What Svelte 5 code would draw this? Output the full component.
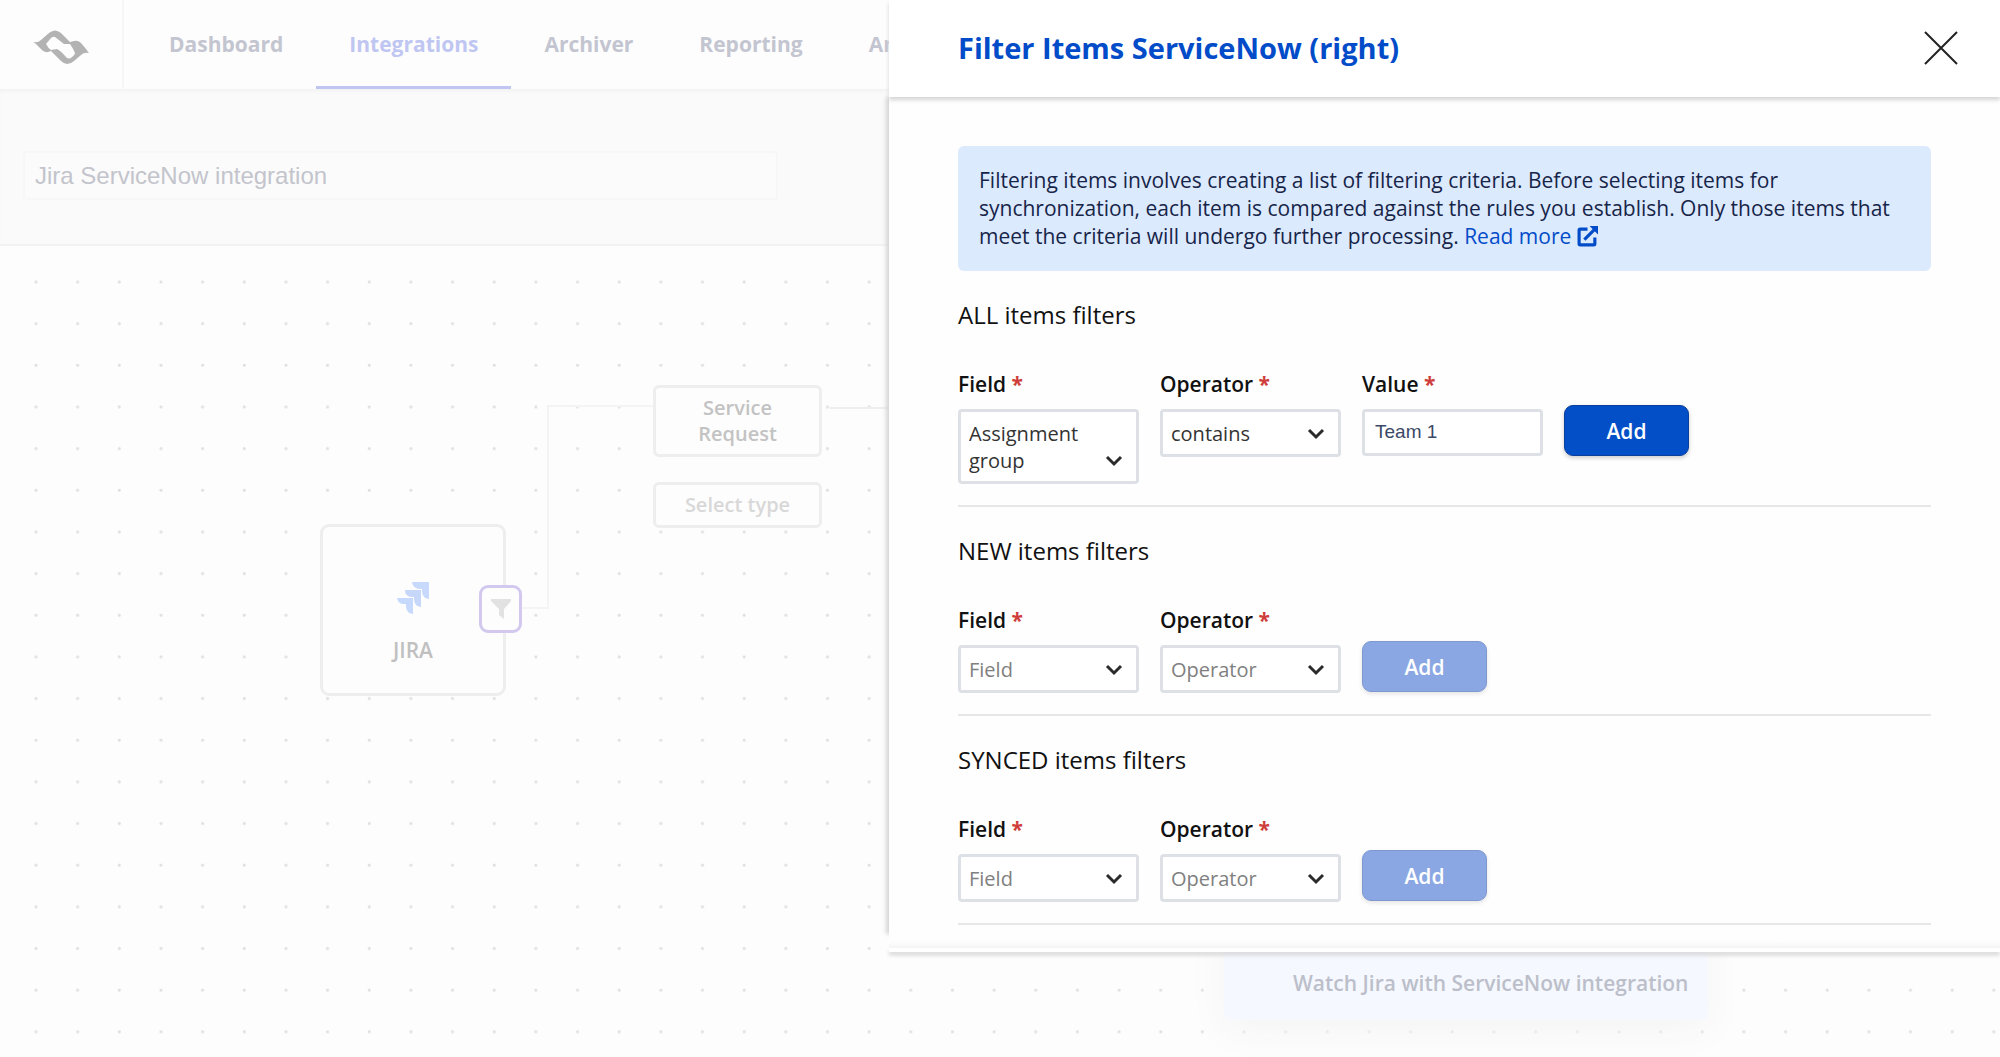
<script lang="ts">
	type Filter = { id: string; title: string; field?: string; operator?: string; value?: string };

	const tabs = ['Dashboard', 'Integrations', 'Archiver', 'Reporting', 'An'];
	const active = 'Integrations';

	let name = $state('Jira ServiceNow integration');
	let filters: Filter[] = $state([
		{ id: 'all', title: 'ALL items filters', field: 'Assignment group', operator: 'contains', value: 'Team 1' },
		{ id: 'new', title: 'NEW items filters' },
		{ id: 'synced', title: 'SYNCED items filters' }
	]);
</script>

{#snippet dropdown(id: string, label: string, value: string | undefined)}
	<div class="field">
		<label for={id}>{label} <span class="required">*</span></label>
		<div class="select">
			<select {id} class:empty={!value}>
				<option>{value ?? label}</option>
			</select>
			<svg class="chevron" viewBox="0 0 18 12" aria-hidden="true">
				<path d="M2 2l7 7 7-7" fill="none" stroke="#2b2b2b" stroke-width="3" />
			</svg>
		</div>
	</div>
{/snippet}

<div class="page">
	<header>
		<a class="logo" href="#home" aria-label="Home">
			<svg viewBox="0 0 56 34" aria-hidden="true">
				<path
					fill="#b3b3b3"
					fill-rule="evenodd"
					d="M0 12q5 1 8-2l8-7q6-5 12 0l9 9 4-1q4-1 7 2l5 6q2 3 3 4-5-1-8 2l-7 6q-7 6-13 0L18 21l-3 1q-4 1-7-3l-5-5zM13 14q2 4 5 6l6-1q4 2 9 8 3 3 6 0 3-2 3-4-2-5-5-9l-6 0-9-7q-2-1-4 1z"
				/>
			</svg>
		</a>
		<nav>
			{#each tabs as tab (tab)}
				<a href="#{tab}" class:active={tab === active}>{tab}</a>
			{/each}
		</nav>
	</header>

	<div class="toolbar">
		<input bind:value={name} aria-label="Integration name" />
	</div>

	<main>
		<svg class="wires" aria-hidden="true">
			<path d="M522 362h26V160h105" />
			<path class="dark" d="M830 162h80" />
		</svg>
		<div class="node jira">
			<svg viewBox="0 0 32 32" aria-hidden="true">
				<path fill="#c7d9fd" d="M15 0h17v17q-7-1-7-8V7h-2q-7 0-8-7z" />
				<path fill="#c7d7fa" d="M8 8h16v17q-7-1-7-8v-2h-2q-7 0-7-7z" />
				<path fill="#c7d9fd" d="M0 16h16v16q-7-1-7-8v-2H7q-6 0-7-6z" />
				<path fill="#fdfdfd" d="M14 7h11v11h-1V8H14zM6 15h11v11h-1V16H6z" />
			</svg>
			<span>JIRA</span>
			<button class="funnel" aria-label="Filter items">
				<svg viewBox="0 0 20 20" aria-hidden="true">
					<path fill="#e2e2e2" d="M0 0h20v2l-7 8v10l-5-4v-6L0 2z" />
				</svg>
			</button>
		</div>
		<button class="node type">Service Request</button>
		<button class="node type blank">Select type</button>
		<a class="watch" href="#watch">Watch Jira with ServiceNow integration</a>
	</main>

	<aside>
		<div class="title">
			<h1>Filter Items ServiceNow (right)</h1>
			<button class="close" aria-label="Close">
				<svg viewBox="0 0 34 34" aria-hidden="true">
					<path d="M1 1l32 32M33 1L1 33" stroke="#222" stroke-width="2" />
				</svg>
			</button>
		</div>
		<div class="body">
			<p class="info">
				Filtering items involves creating a list of filtering criteria. Before selecting items for synchronization,
				each item is compared against the rules you establish. Only those items that meet the criteria will undergo
				further processing.
				<a href="#docs">Read more
					<svg viewBox="0 0 20 20" aria-hidden="true">
						<path d="M10 3H3q-1 0-1 1v13q0 1 1 1h13q1 0 1-1v-6M7 13L17 3" />
						<path class="tip" d="M12 0h8v8z" />
					</svg></a>
			</p>
			{#each filters as filter (filter.id)}
				<section>
					<h2>{filter.title}</h2>
					<div class="row">
						{@render dropdown(filter.id + '-field', 'Field', filter.field)}
						{@render dropdown(filter.id + '-operator', 'Operator', filter.operator)}
						{#if filter.value !== undefined}
							<div class="field">
								<label for="{filter.id}-value">Value <span class="required">*</span></label>
								<input id="{filter.id}-value" bind:value={filter.value} />
							</div>
						{/if}
						<button class="add" disabled={!filter.value}>Add</button>
					</div>
				</section>
			{/each}
		</div>
		<div class="fade"></div>
		<div class="edge"></div>
	</aside>
</div>

<style>
	* {
		box-sizing: border-box;
	}
	.page {
		position: relative;
		display: flex;
		flex-direction: column;
		min-height: 100vh;
		overflow: hidden;
		background: #fdfdfd;
		font-family: 'Open Sans', 'Noto Sans', sans-serif;
	}
	button,
	input,
	select {
		font-family: inherit;
		margin: 0;
	}
	a {
		text-decoration: none;
	}

	header {
		display: flex;
		height: 89px;
	}
	.logo {
		display: flex;
		align-items: center;
		justify-content: center;
		width: 124px;
		padding-top: 4px;
		border-right: 2px solid #f7f7f7;
	}
	.logo svg {
		width: 56px;
		height: 34px;
	}
	nav {
		display: flex;
		padding-left: 12px;
	}
	nav a {
		padding: 29px 33px 0;
		border-bottom: 3px solid transparent;
		color: #c3c5d0;
		font-size: 21px;
		font-weight: 700;
		line-height: 30px;
	}
	nav a.active {
		color: #bfc6f2;
		border-color: #c0c6f1;
	}

	.toolbar {
		height: 157px;
		padding: 62px 23px 0;
		background: #fafafa;
		border-bottom: 2px solid #f2f2f2;
		box-shadow: inset 0 4px 4px -2px #f1f1f1;
	}
	.toolbar input {
		width: 755px;
		height: 49px;
		padding: 0 10px;
		border: 2px solid #f7f7f7;
		border-radius: 4px;
		background: #fbfbfb;
		color: #c3c4cc;
		font: 24px 'Liberation Sans', sans-serif;
	}

	main {
		position: relative;
		flex: 1;
		background: radial-gradient(circle at 36px 36px, #e0e0e0 1px, transparent 2px);
		background-size: calc(100vw / 48) calc(100vw / 48);
	}
	.wires {
		position: absolute;
		width: 100%;
		height: 100%;
		fill: none;
		stroke: #f4f4f4;
		stroke-width: 2;
	}
	.wires .dark {
		stroke: #eee;
	}
	.node {
		position: absolute;
		background: #fdfdfd;
		border: 3px solid #eee;
		border-radius: 6px;
	}
	.jira {
		left: 320px;
		top: 278px;
		width: 186px;
		height: 172px;
		border-radius: 9px;
		display: flex;
		flex-direction: column;
		align-items: center;
		gap: 22px;
		padding-top: 55px;
		color: #c0c0c0;
		font-size: 21px;
		font-weight: 600;
		line-height: 28px;
	}
	.jira > svg {
		width: 32px;
		height: 32px;
	}
	.funnel {
		position: absolute;
		left: 156px;
		top: 58px;
		width: 43px;
		height: 48px;
		padding: 4px 0 0;
		background: #fdfdfd;
		border: 3px solid #d3c9ee;
		border-radius: 9px;
	}
	.funnel svg {
		width: 20px;
		height: 20px;
	}
	.type {
		left: 653px;
		top: 139px;
		width: 169px;
		padding: 7px 30px;
		color: #c3c3c3;
		font-size: 20px;
		font-weight: 600;
		line-height: 26px;
	}
	.type.blank {
		top: 236px;
		padding: 7px 0;
		color: #d8d8d8;
	}
	.watch {
		position: absolute;
		left: 1224px;
		bottom: 37px;
		padding: 60px 20px 22px 69px;
		border-radius: 6px;
		background: #f5f8ff;
		box-shadow: 0 10px 40px #f4f4f6;
		color: #bcbfca;
		font-size: 21px;
		font-weight: 600;
		line-height: 30px;
	}

	aside {
		position: absolute;
		top: 0;
		right: 0;
		width: calc(100% - 889px);
	}
	.title {
		position: relative;
		display: flex;
		align-items: center;
		justify-content: space-between;
		height: 97px;
		padding: 0 42px 2px 69px;
		background: #fff;
		box-shadow: 0 3px 4px #d5d5d5;
	}
	h1 {
		margin: 0;
		color: #024cc9;
		font-size: 29px;
		font-weight: 700;
		line-height: 40px;
	}
	.close {
		padding: 0;
		border: 0;
		background: none;
	}
	.close svg {
		display: block;
		width: 34px;
		height: 34px;
	}
	.body {
		padding: 49px 69px 9px;
		background: #fefefe;
		box-shadow: -3px 0 4px #d5d5d5;
	}
	.info {
		margin: 0;
		padding: 20px 21px 21px;
		border-radius: 6px;
		background: #dceafe;
		color: #172549;
		font-size: 21px;
		line-height: 28px;
	}
	.info a {
		color: #024cc9;
		white-space: nowrap;
	}
	.info svg {
		width: 21px;
		height: 21px;
		vertical-align: -3px;
		fill: none;
		stroke: #024cc9;
		stroke-width: 3;
	}
	.info .tip {
		fill: #024cc9;
		stroke: none;
	}

	section {
		padding: 28px 0 21px;
		border-bottom: 2px solid #e6e7e9;
	}
	h2 {
		margin: 0 0 38px;
		color: #111;
		font-size: 24px;
		font-weight: 400;
		line-height: 32px;
	}
	.row {
		display: flex;
		align-items: flex-start;
		gap: 21px;
	}
	.field {
		display: flex;
		flex-direction: column;
		gap: 10px;
		width: 181px;
	}
	label {
		color: #111;
		font-size: 21px;
		font-weight: 600;
		line-height: 30px;
	}
	.required {
		color: #cf3d3a;
		font-weight: 700;
	}
	.select {
		position: relative;
	}
	select,
	.field input {
		display: block;
		width: 100%;
		padding: 8px 8px 7px;
		border: 3px solid #dde1e6;
		border-radius: 4px;
		background: #fff;
		color: #333;
		font-size: 20px;
		line-height: 27px;
	}
	select {
		appearance: none;
		height: auto;
		padding-right: 44px;
		white-space: normal;
	}
	select.empty {
		color: #808080;
	}
	.field input {
		padding: 6px 10px 7px;
		color: #3b4866;
		font: 19px/28px 'Liberation Sans', sans-serif;
	}
	.chevron {
		position: absolute;
		right: 16px;
		bottom: 17px;
		width: 18px;
		height: 12px;
		pointer-events: none;
	}
	.add {
		width: 125px;
		height: 51px;
		margin-top: 36px;
		border: 1px solid #0a3f9c;
		border-radius: 9px;
		background: #034fc8;
		box-shadow: 0 2px 4px #ccc;
		color: #fff;
		font-size: 21px;
		font-weight: 600;
	}
	.add:disabled {
		background: #8aa7e3;
		border-color: #7f99cf;
		box-shadow: 0 2px 4px #e4e4e4;
	}
	.fade {
		height: 14px;
		background: linear-gradient(#fefefe 50%, #f5f5f5);
	}
	.edge {
		position: relative;
		height: 4px;
		background: #fff;
		box-shadow: 0 3px 4px #d0d0d0;
	}
</style>
